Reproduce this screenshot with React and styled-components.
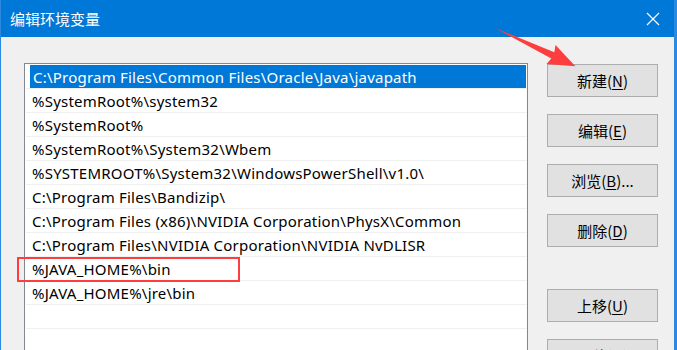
import React from 'react';
import styled, { createGlobalStyle } from 'styled-components';

const Global = createGlobalStyle`
  html, body {
    margin: 0;
    padding: 0;
    background: #f0f0f0;
    overflow: hidden;
  }
`;

const Window = styled.div`
  position: relative;
  width: 677px;
  height: 350px;
  box-sizing: border-box;
  border-left: 1px solid #2b8ae0;
  border-right: 3px solid #2b8ae0;
  background: #f0f0f0;
  overflow: hidden;
  font-family: "Noto Sans", "Noto Sans CJK SC", sans-serif;
`;

const TitleBar = styled.div`
  height: 37px;
  background: #0078d7;
  color: #fff;
  display: flex;
  align-items: center;
  justify-content: space-between;
  padding: 0 14px 0 9px;
  font-size: 15px;
  font-family: "Noto Sans CJK SC", sans-serif;
`;

const Close = styled.div`
  width: 14px;
  height: 14px;
  display: flex;
`;

const Body = styled.div`
  display: flex;
  align-items: flex-start;
  padding: 26px 0 0 23px;
  gap: 19px;
`;

const List = styled.div`
  width: 504px;
  height: 300px;
  box-sizing: border-box;
  border: 1px solid #828790;
  background: #fff;
  padding-top: 1px;
`;

const Row = styled.div`
  position: relative;
  height: 24px;
  box-sizing: border-box;
  margin-left: 1px;
  border-bottom: 1px solid #f0f0f0;
  display: flex;
  align-items: center;
`;

const Item = styled.div`
  height: 23px;
  flex: 1;
  margin: 0 1px 0 ${p => (p.$selected ? 4 : 0)}px;
  padding-left: ${p => (p.$selected ? 3 : 6)}px;
  display: flex;
  align-items: center;
  font-size: 15px;
  letter-spacing: 0.22px;
  white-space: nowrap;
  color: ${p => (p.$selected ? '#fff' : '#000')};
  background: ${p => (p.$selected ? '#0078d7' : 'transparent')};
`;

const Mark = styled.div`
  position: absolute;
  left: -9px;
  top: 0px;
  width: 223px;
  height: 25px;
  box-sizing: border-box;
  border: 2px solid #fe3e3e;
  pointer-events: none;
`;

const Buttons = styled.div`
  display: flex;
  flex-direction: column;
  gap: 17px;
  padding-top: 1px;
`;

const Button = styled.button`
  width: 111px;
  height: 33px;
  margin-top: ${p => p.$extra || 0}px;
  box-sizing: border-box;
  border: 1px solid #adadad;
  background: #e1e1e1;
  color: #000;
  font-size: 15px;
  font-family: "Noto Sans CJK SC", "Noto Sans", sans-serif;
  padding: 0;
  display: flex;
  align-items: center;
  justify-content: center;

  u {
    text-underline-offset: 2px;
  }
`;

const Arrow = styled.svg`
  position: absolute;
  left: 0;
  top: 0;
  pointer-events: none;
`;

const paths = [
  'C:\\Program Files\\Common Files\\Oracle\\Java\\javapath',
  '%SystemRoot%\\system32',
  '%SystemRoot%',
  '%SystemRoot%\\System32\\Wbem',
  '%SYSTEMROOT%\\System32\\WindowsPowerShell\\v1.0\\',
  'C:\\Program Files\\Bandizip\\',
  'C:\\Program Files (x86)\\NVIDIA Corporation\\PhysX\\Common',
  'C:\\Program Files\\NVIDIA Corporation\\NVIDIA NvDLISR',
  '%JAVA_HOME%\\bin',
  '%JAVA_HOME%\\jre\\bin',
  '',
  '',
];

const buttons = [
  { label: '新建', key: 'N' },
  { label: '编辑', key: 'E' },
  { label: '浏览', key: 'B', tail: '...' },
  { label: '删除', key: 'D' },
  { label: '上移', key: 'U', extra: 25 },
  { label: '下移', key: 'O' },
];

export default function App() {
  return (
    <>
      <Global />
      <Window>
        <TitleBar>
          <span>编辑环境变量</span>
          <Close>
            <svg width="14" height="14" viewBox="0 0 14 14">
              <path d="M1 1L13 13M13 1L1 13" stroke="#fff" strokeWidth="1.2" />
            </svg>
          </Close>
        </TitleBar>
        <Body>
          <List>
            {paths.map((p, i) => (
              <Row key={i}>
                <Item $selected={i === 0}>{p}</Item>
                {i === 8 && <Mark />}
              </Row>
            ))}
          </List>
          <Buttons>
            {buttons.map(b => (
              <Button key={b.key} $extra={b.extra}>
                {b.label}(<u>{b.key}</u>){b.tail}
              </Button>
            ))}
          </Buttons>
        </Body>
        <Arrow width="677" height="350">
          <g transform="translate(494 28) rotate(25.4)">
            <polygon points="0,0 64,-3.5 62,-10.5 89,0 62,10.5 64,3.5" fill="#fe3e3e" />
          </g>
        </Arrow>
      </Window>
    </>
  );
}
